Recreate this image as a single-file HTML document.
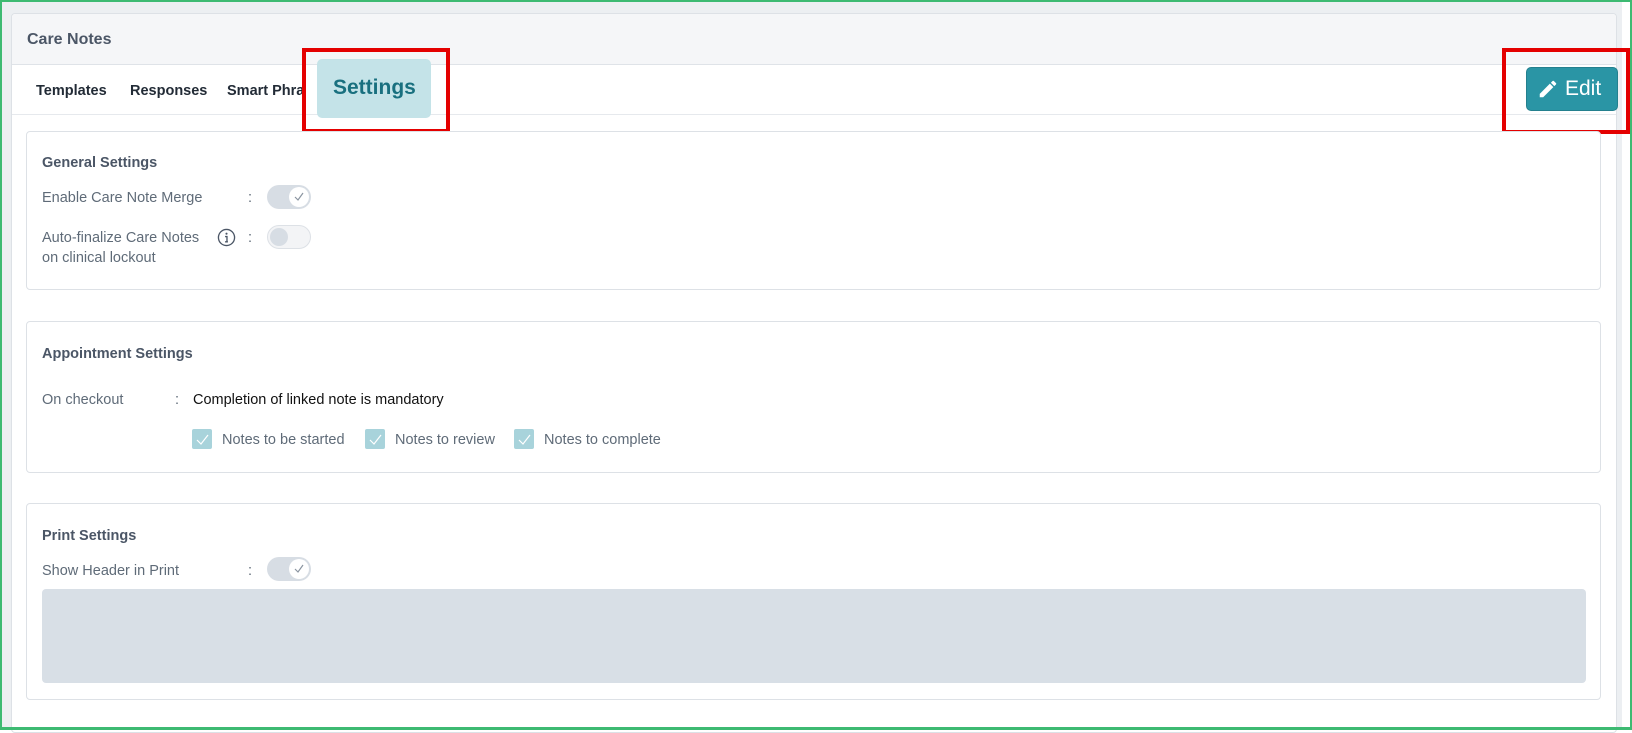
<!DOCTYPE html>
<html><head><style>
*{box-sizing:border-box;margin:0;padding:0}
body{width:1632px;height:730px;overflow:hidden;background:#fff;font-family:"Liberation Sans",Arial,sans-serif;position:relative}
.frame{position:absolute;left:0;top:0;width:1632px;height:730px;border:2px solid #3dba72;border-bottom-width:3px}
.bg{position:absolute;left:2px;top:2px;width:1620px;height:726px;background:#eceff2}
.outer{position:absolute;left:11px;top:13px;width:1606px;height:720px;background:#fff;border:1px solid #dde1e6;border-radius:4px}
.hdr{position:absolute;left:0;top:0;right:0;height:51px;background:#f5f6f8;border-bottom:1px solid #dfe3e8;border-radius:4px 4px 0 0}
.abs{position:absolute}
.t{position:absolute;font-size:14.5px;color:#5f6b78;white-space:nowrap}
.b{font-weight:bold;color:#4b5666}
.card{position:absolute;left:26px;width:1575px;border:1px solid #dde1e6;border-radius:4px;background:#fff}
.tog{position:absolute;width:44px;height:24px;border-radius:12px;background:#d7dde4}
.tog .k{position:absolute;top:2px;width:20px;height:20px;border-radius:50%;background:#fff}
.cb{position:absolute;width:20px;height:20px;border-radius:2px;background:#a8d3db}
.red{position:absolute;border:4px solid #e40000}
</style></head><body>
<div class="bg"></div>
<div class="abs" style="left:1622px;top:2px;width:8px;height:726px;background:#fff"></div>
<div class="outer">
 <div class="hdr"></div>
 <div class="t b" style="left:15px;top:17px;font-size:16px">Care Notes</div>
 <div class="abs" style="left:0;right:0;top:100px;border-top:1px solid #e6e9ed"></div>
 <div class="t b" style="left:24px;top:69px;color:#222b36;font-size:14.5px">Templates</div>
 <div class="t b" style="left:118px;top:69px;color:#222b36;font-size:14.5px">Responses</div>
 <div class="t b" style="left:215px;top:69px;color:#222b36;font-size:14.5px">Smart Phra</div>
</div>
<div class="abs" style="left:317px;top:59px;width:114px;height:59px;background:#c4e3e8;border-radius:5px"></div>
<div class="t b" style="left:333px;top:76px;font-size:21px;color:#19707f">Settings</div>
<div class="red" style="left:302px;top:48px;width:148px;height:85px"></div>
<div class="abs" style="left:1526px;top:67px;width:92px;height:44px;background:#2a95a5;border-radius:5px;border:1px solid #24808e"></div>
<svg class="abs" style="left:1537px;top:78px" width="22" height="22" viewBox="0 0 24 24"><path d="M3 17.25V21h3.75L17.81 9.94l-3.75-3.75L3 17.25zM20.71 7.04a1 1 0 000-1.41l-2.34-2.34a1 1 0 00-1.41 0l-1.83 1.83 3.75 3.75 1.83-1.83z" fill="#fff"/></svg>
<div class="t" style="left:1565px;top:77px;font-size:21px;color:#fff">Edit</div>
<div class="red" style="left:1502px;top:48px;width:128px;height:86px"></div>

<div class="card" style="top:131px;height:159px"></div>
<div class="t b" style="left:42px;top:155px">General Settings</div>
<div class="t" style="left:42px;top:190px">Enable Care Note Merge</div>
<div class="t" style="left:248px;top:190px">:</div>
<div class="tog" style="left:267px;top:185px"><div class="k" style="left:22px"></div><svg class="abs" style="left:26px;top:6px" width="12" height="12" viewBox="0 0 12 12"><path d="M2 6l3 3 5-7" fill="none" stroke="#8a94a0" stroke-width="1.2"/></svg></div>
<div class="t" style="left:42px;top:230px">Auto-finalize Care Notes</div>
<div class="t" style="left:42px;top:250px">on clinical lockout</div>
<svg class="abs" style="left:217px;top:228px" width="19" height="19" viewBox="0 0 20 20"><circle cx="10" cy="10" r="8.5" fill="none" stroke="#4b5666" stroke-width="1.4"/><circle cx="10" cy="6" r="1.1" fill="#4b5666"/><path d="M8.5 9h2v5.5M8.5 14.5h3" stroke="#4b5666" stroke-width="1.4" fill="none"/></svg>
<div class="t" style="left:248px;top:230px">:</div>
<div class="tog" style="left:267px;top:225px;background:#f3f4f6;border:1px solid #dde1e6"><div class="k" style="left:2px;top:2px;width:18px;height:18px;background:#d7dde4"></div></div>

<div class="card" style="top:321px;height:152px"></div>
<div class="t b" style="left:42px;top:346px">Appointment Settings</div>
<div class="t" style="left:42px;top:392px">On checkout</div>
<div class="t" style="left:175px;top:392px">:</div>
<div class="t" style="left:193px;top:392px;color:#111">Completion of linked note is mandatory</div>
<div class="cb" style="left:192px;top:429px"></div><div class="t" style="left:222px;top:432px">Notes to be started</div>
<div class="cb" style="left:365px;top:429px"></div><div class="t" style="left:395px;top:432px">Notes to review</div>
<div class="cb" style="left:514px;top:429px"></div><div class="t" style="left:544px;top:432px">Notes to complete</div>
<svg class="abs" style="left:0;top:0" width="600" height="460"><g fill="none" stroke="#fff" stroke-width="1.2"><path d="M197 440l4 4 7-9"/><path d="M370 440l4 4 7-9"/><path d="M519 440l4 4 7-9"/></g></svg>

<div class="card" style="top:503px;height:197px"></div>
<div class="t b" style="left:42px;top:528px">Print Settings</div>
<div class="t" style="left:42px;top:563px">Show Header in Print</div>
<div class="t" style="left:248px;top:563px">:</div>
<div class="tog" style="left:267px;top:557px"><div class="k" style="left:22px"></div><svg class="abs" style="left:26px;top:6px" width="12" height="12" viewBox="0 0 12 12"><path d="M2 6l3 3 5-7" fill="none" stroke="#8a94a0" stroke-width="1.2"/></svg></div>
<div class="abs" style="left:42px;top:589px;width:1544px;height:94px;background:#d8dfe6;border-radius:4px"></div>
<div class="frame"></div>
</body></html>
